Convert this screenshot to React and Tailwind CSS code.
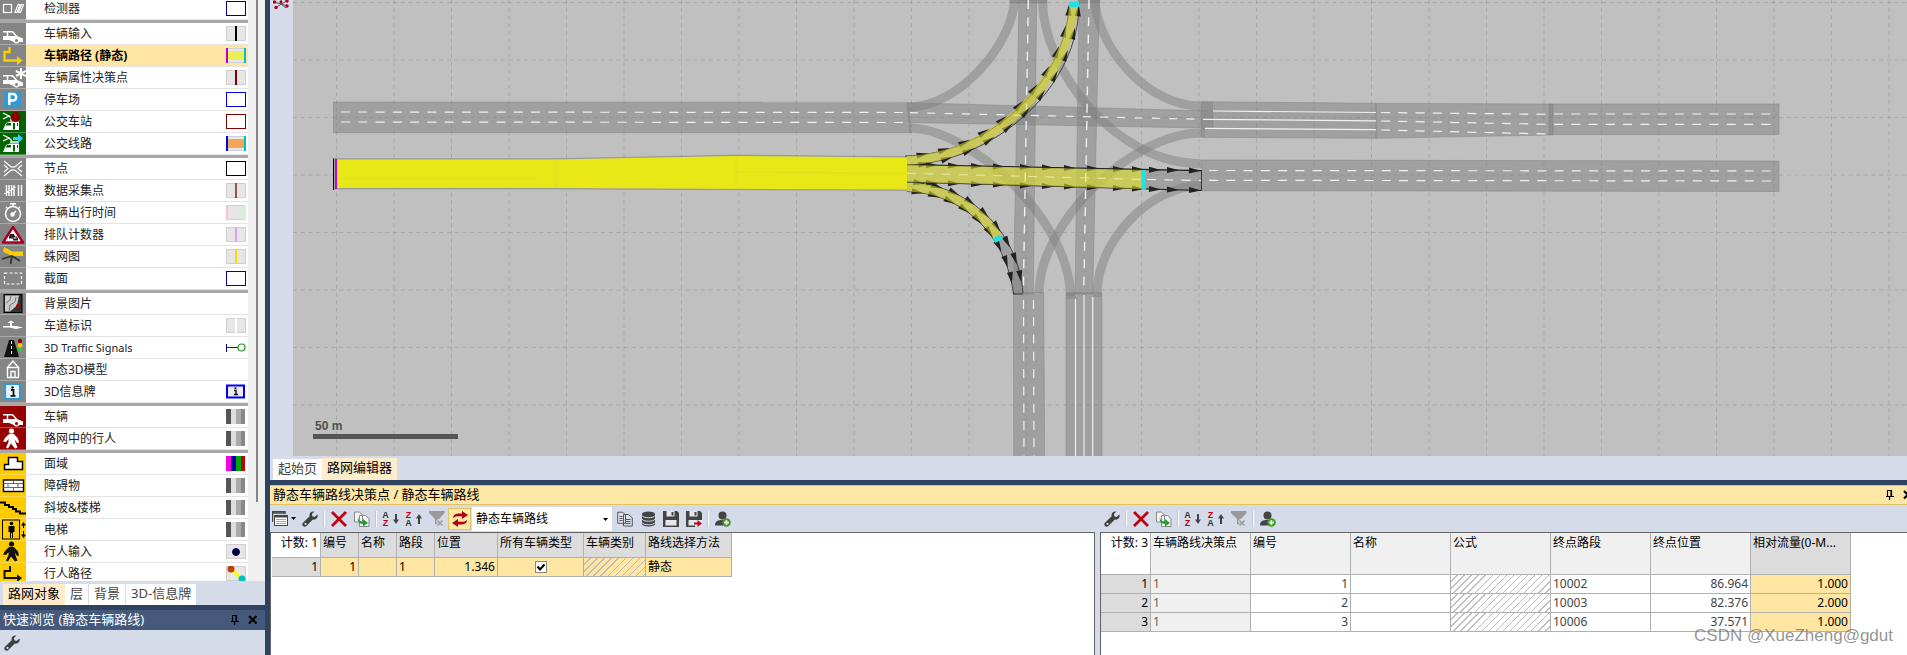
import { useState } from 'react';
import { clsx } from 'clsx';

const GREY = 'bg-[#858585]';
const GREEN = 'bg-[#006400]';
const RED = 'bg-[#960000]';
const YELLOW = 'bg-[#ffcc00]';

const objectGroups = [
  [{ id: 'detector', label: '检测器', bg: GREY, swatch: 'box-navy' }],
  [
    { id: 'input', label: '车辆输入', bg: GREY, swatch: 'bar-black' },
    { id: 'route', label: '车辆路径 (静态)', bg: GREY, swatch: 'route' },
    { id: 'attr', label: '车辆属性决策点', bg: GREY, swatch: 'bar-maroon' },
    { id: 'parking', label: '停车场', bg: GREY, swatch: 'box-blue' },
    { id: 'stop', label: '公交车站', bg: GREEN, swatch: 'box-maroon' },
    { id: 'line', label: '公交线路', bg: GREEN, swatch: 'line' },
  ],
  [
    { id: 'node', label: '节点', bg: GREY, swatch: 'box-black' },
    { id: 'collect', label: '数据采集点', bg: GREY, swatch: 'bar-brown' },
    { id: 'time', label: '车辆出行时间', bg: GREY, swatch: 'time' },
    { id: 'queue', label: '排队计数器', bg: GREY, swatch: 'bar-violet' },
    { id: 'flow', label: '蛛网图', bg: GREY, swatch: 'bar-gold' },
    { id: 'section', label: '截面', bg: GREY, swatch: 'box-mid' },
  ],
  [
    { id: 'image', label: '背景图片', bg: GREY },
    { id: 'marking', label: '车道标识', bg: GREY, swatch: 'bar-white' },
    { id: 'signal', label: '3D Traffic Signals', bg: GREY, swatch: 'signal', latin: true },
    { id: 'model', label: '静态3D模型', bg: GREY },
    { id: 'info', label: '3D信息牌', bg: GREY, swatch: 'info' },
  ],
  [
    { id: 'vehicle', label: '车辆', bg: RED, swatch: 'greys' },
    { id: 'person', label: '路网中的行人', bg: RED, swatch: 'greys' },
  ],
  [
    { id: 'area', label: '面域', bg: YELLOW, swatch: 'colors' },
    { id: 'obstacle', label: '障碍物', bg: YELLOW, swatch: 'greys' },
    { id: 'ramp', label: '斜坡&楼梯', bg: YELLOW, swatch: 'greys' },
    { id: 'lift', label: '电梯', bg: YELLOW, swatch: 'greys' },
    { id: 'pedInput', label: '行人输入', bg: YELLOW, swatch: 'dot' },
    { id: 'pedRoute', label: '行人路径', bg: YELLOW, swatch: 'pedRoute' },
  ],
];

const car = (wheel) => (
  <>
    <path d="M3 8.700h9.500l4.500 5M7.500 9v4.500" fill="none" stroke="#fff" strokeWidth="1.500" />
    <path d="M3 13h14l6 2.500V19h-9l-5-2H3z" fill="#fff" />
    <circle cx="16.500" cy="17.500" r="2.300" fill={wheel} stroke="#fff" strokeWidth="1.400" />
  </>
);

const tram = (
  <>
    <path d="M3 2l6 3-6 3M9 5l3 3" fill="none" stroke="#fff" strokeWidth="1.300" />
    <path d="M3 19l3-7 4-1.500h9V19z" fill="#fff" />
    <path d="M5.500 14.500l1.500-2.500h4v2.500zM13 18.500V12h2v6.500zM17 12h1v3h-1z" fill="#006400" />
    <path d="M10 9h9" stroke="#fff" strokeWidth="1.500" />
  </>
);

const walker = (color) => (
  <g fill={color}>
    <circle cx="11.500" cy="3" r="2.600" />
    <path d="M9 6h5l4 4.500 1 4-2 .5-2-3.500.5 3 2 5-2.500 1-4-5-3 5L6 19.500l2.500-5.500V11L6 14l-3-.5L5 10z" />
  </g>
);

const objectIcons = {
  detector: (
    <g fill="none" stroke="#fff" strokeWidth="1.200">
      <rect x="3.500" y="6.500" width="8" height="8" />
      <path d="M15 14.500l3-8h2l-3 8zM18.500 14.500l3-8h2l-3 8z" />
    </g>
  ),
  input: car('#858585'),
  vehicle: car('#960000'),
  route: (
    <>
      <path d="M9.500 2v5h-5v8.500H18" fill="none" stroke="#fc0" strokeWidth="2.400" />
      <path d="M17 11l5.500 4.500L17 20z" fill="#fc0" />
    </>
  ),
  attr: (
    <>
      {car('#858585')}
      <path d="M21 1v11M16 4l10 5M26 4l-10 5" stroke="#fff" strokeWidth="2" />
    </>
  ),
  parking: (
    <>
      <rect x="4" y="2" width="17" height="17" fill="#3399d0" />
      <path d="M9.300 16V5H13a3.200 3.200 0 0 1 0 6.500H9.300" fill="none" stroke="#fff" strokeWidth="2.400" />
    </>
  ),
  stop: (
    <>
      {tram}
      <circle cx="15.500" cy="6" r="5" fill="#8b0000" />
    </>
  ),
  line: (
    <>
      {tram}
      <path d="M13 4h5V1l5 4.500-5 4.500V7h-5z" fill="#3cf" />
    </>
  ),
  node: (
    <path d="M4 3l6 5c1.500 1.500 4.500 1.500 6 0l6-5M4 18l6-5c1.500-1.500 4.500-1.500 6 0l6 5M4 7l4 3.500L4 14M22 7l-4 3.500 4 3.500" fill="none" stroke="#fff" strokeWidth="1.100" />
  ),
  collect: (
    <path d="M6.500 5v11M9 5v11M11.500 5v11M14 5v11M4.500 14l11-7M18.500 5v11M21.500 5v11" stroke="#fff" strokeWidth="1.400" />
  ),
  time: (
    <g fill="none" stroke="#fff" strokeWidth="1.500">
      <circle cx="13" cy="12" r="7.500" />
      <path d="M10 1.800h6M13 2v3M6 5l1.500 1.500M20 5l-1.500 1.500M16 9l-4 4" />
      <circle cx="12.500" cy="12.500" r="1.500" />
    </g>
  ),
  queue: (
    <>
      <path d="M13 3L3 18.500h20z" fill="#fff" stroke="#a50021" strokeWidth="2.400" strokeLinejoin="round" />
      <path d="M9 12.500l1-2.500h4l1 2.500h2l1 2v2h-5v-2H9z" fill="#222" />
      <path d="M13.500 14h3" stroke="#fff" />
    </>
  ),
  flow: (
    <>
      <path d="M4 1l8 4.500h11V10H12L3 5.500z" fill="#fc0" />
      <path d="M2 13l10-3 8 5M12 10l-1.500 8" fill="none" stroke="#333" strokeWidth="1.800" />
    </>
  ),
  section: <rect x="4.500" y="5" width="17" height="11" fill="none" stroke="#fff" strokeWidth="1.200" strokeDasharray="3 2" />,
  image: (
    <>
      <rect x="4" y="1.500" width="18" height="18" fill="#333" stroke="#000" />
      <path d="M5 2.500h14l-2 10-7 6H5z" fill="#ccc" />
      <path d="M6 10l4-3 1-4M9 18l1-6 5-3 1-5" fill="none" stroke="#777" />
      <circle cx="18" cy="13" r="2" fill="#a00" />
    </>
  ),
  marking: (
    <path d="M3 11h13l7 1.500-7 1.500-7-1.500H3zM10 11V8H7.500L11 5.500 14.500 8H12v3z" fill="#fff" />
  ),
  signal: (
    <>
      <path d="M9 3h5l5 17H4z" fill="#111" />
      <path d="M11.500 4v15" stroke="#fff" strokeDasharray="3 2" />
      <circle cx="20" cy="4" r="2.200" fill="#a00000" />
      <circle cx="20" cy="8.500" r="2.200" fill="#fc0" />
      <circle cx="20" cy="13" r="2.200" fill="#3c3" />
    </>
  ),
  model: (
    <path d="M7.500 8.500L13 2l5.500 6.500zM7.500 8.500v10h11v-10M11 18v-5.500h4V18" fill="none" stroke="#fff" strokeWidth="1.400" />
  ),
  info: (
    <>
      <rect x="5" y="3" width="15" height="15" fill="#e8f4fa" stroke="#3399cc" strokeWidth="2.200" />
      <path d="M11 9h2.500v5.500M10.500 14.800h5" fill="none" stroke="#111" strokeWidth="1.800" />
      <circle cx="12.500" cy="6.500" r="1.200" fill="#111" />
    </>
  ),
  person: walker('#fff'),
  area: <path d="M4.500 16.500v-5h4v-7h9v4h5v8z" fill="#fff" stroke="#000" strokeWidth="1.500" />,
  obstacle: (
    <>
      <rect x="3.500" y="5" width="20" height="11.500" fill="#fff" stroke="#000" strokeWidth="1.400" />
      <path d="M3 8.500h20M3 12.500h20M13.500 5v3.500M8 9v3.500M18 9v3.500M13.500 13v3.500" stroke="#444" strokeWidth=".8" />
    </>
  ),
  ramp: <path d="M0 5.500h5v2.500h4v2h4v2h3v2.500h4v2h6" fill="none" stroke="#000" strokeWidth="2" />,
  lift: (
    <>
      <rect x="2.500" y="1" width="17" height="19" fill="none" stroke="#000" />
      <circle cx="11.500" cy="4.500" r="1.800" />
      <path d="M8.500 7h6v6H13v6h-1v-5h-1v5h-1v-6H8.500z" />
      <path d="M23.500 4v5M23.500 12v6" stroke="#000" />
      <path d="M21 6.500L23.500 3 26 6.500zM21 15.500l2.500 3.500 2.500-3.500z" />
    </>
  ),
  pedInput: walker('#111'),
  pedRoute: (
    <>
      <path d="M10 3v5H4.500v7H18" fill="none" stroke="#111" strokeWidth="2" />
      <path d="M17 11.500l5 3.500-5 4z" fill="#111" />
    </>
  ),
};

const boxColors = {
  'box-navy': 'border-[#000080]',
  'box-blue': 'border-[#0000e6]',
  'box-maroon': 'border-[#800000]',
  'box-black': 'border-black',
  'box-mid': 'border-[#0000b4]',
};

const barColors = {
  'bar-black': 'bg-black',
  'bar-maroon': 'bg-[#800000]',
  'bar-brown': 'bg-[#8b5a3c]',
  'bar-violet': 'bg-[#d9a0ff]',
  'bar-gold': 'bg-[#ffd700]',
  'bar-white': 'bg-white',
};

function Swatch({ kind }) {
  if (!kind) return <span className="h-[15px] w-5" />;
  if (boxColors[kind]) return <span className={clsx('h-[15px] w-5 border bg-white', boxColors[kind])} />;
  if (barColors[kind]) {
    return (
      <span className="flex h-[15px] w-5 justify-center border border-[#d0d0d0] bg-[#e6e6e6]">
        <span className={clsx('-my-px w-0.5', barColors[kind])} />
      </span>
    );
  }
  if (kind === 'greys' || kind === 'colors') {
    const grey = kind === 'greys';
    return (
      <span className="flex h-[15px] w-5">
        <span className={clsx('w-[5px]', grey ? 'bg-[#555]' : 'bg-[#f0d]')} />
        <span className={clsx('w-[5px]', grey ? 'bg-[#ddd]' : 'bg-[#0000a8]')} />
        <span className={clsx('w-[5px]', grey ? 'bg-[#aaa]' : 'bg-[#00a800]')} />
        <span className={clsx('w-1', grey ? 'bg-[#888]' : 'bg-[#c00000]')} />
      </span>
    );
  }
  return (
    <svg className="h-[15px] w-5" viewBox="0 0 20 15">
      {kind !== 'signal' && kind !== 'info' && <rect x=".5" y=".5" width="19" height="14" fill="#e6e6e6" stroke="#d0d0d0" />}
      {kind === 'route' && (
        <>
          <rect x="2" y="3" width="16" height="9" fill="#eded55" />
          <path d="M1 0v15" stroke="#c000c0" strokeWidth="2" />
          <path d="M19 0v15" stroke="#00c0c0" strokeWidth="2" />
        </>
      )}
      {kind === 'line' && (
        <>
          <rect x="2" y="3" width="16" height="9" fill="#f4a55c" />
          <path d="M1 0v15" stroke="#0000f0" strokeWidth="2" />
          <path d="M19 0v15" stroke="#00c0c0" strokeWidth="2" />
        </>
      )}
      {kind === 'time' && (
        <>
          <path d="M1 0v15" stroke="#ffc0c0" strokeWidth="2" />
          <path d="M19 0v15" stroke="#c0ffc0" strokeWidth="2" />
        </>
      )}
      {kind === 'signal' && (
        <>
          <path d="M.5 4v8" stroke="#000080" />
          <path d="M1 7.500h11" stroke="#800000" />
          <circle cx="15.500" cy="7.500" r="3.500" fill="#fff" stroke="#1a961a" strokeWidth="1.200" />
        </>
      )}
      {kind === 'info' && (
        <>
          <rect x="1" y="1.500" width="17" height="12" fill="#ebebeb" stroke="#0000f5" strokeWidth="2" />
          <path d="M8 6.500h2V10M8 10.500h4" fill="none" stroke="#111" strokeWidth="1.400" />
          <rect x="8.500" y="3.500" width="2" height="1.500" />
        </>
      )}
      {kind === 'dot' && <circle cx="10" cy="8" r="3.500" fill="#000020" stroke="#000080" />}
      {kind === 'pedRoute' && (
        <>
          <path d="M5 3l12 11" stroke="#ff0" strokeWidth="3" />
          <circle cx="5" cy="3" r="3.500" fill="#c04000" />
          <circle cx="16" cy="13" r="3.500" fill="#00c0c0" />
        </>
      )}
    </svg>
  );
}

function PinIcon() {
  return (
    <svg className="h-3 w-3" viewBox="0 0 12 12" fill="none" stroke="#000">
      <path d="M3.500 7V1.500h4V7M7 1v6M2 7.500h8M5.500 8v3" strokeWidth="1.200" />
    </svg>
  );
}

function CloseIcon() {
  return (
    <svg className="h-3 w-3 shrink-0" viewBox="0 0 12 12" stroke="#000" strokeWidth="2.200">
      <path d="M2 2l7.500 7.500M9.500 2L2 9.500" />
    </svg>
  );
}

const toolIcons = {
  list: (
    <>
      <path d="M.5 11V.7H13V3" fill="none" stroke="#444" strokeWidth="1.400" />
      <path d="M.5 2H13" stroke="#444" strokeWidth="1.400" />
      <rect x="2.500" y="4.500" width="13" height="10" fill="#fff" stroke="#444" />
      <path d="M2 5.500h14" stroke="#444" strokeWidth="2" />
      <path d="M4.500 8.500h9M4.500 10.500h9M4.500 12.500h9" stroke="#555" strokeDasharray="1 1" />
    </>
  ),
  wrench: (
    <path d="M15.500 3.500l-3 2.500-2.200-.8-.4-2.200L12.500.6C9.500-.3 7 2 7.600 5.200L1 11.700c-1 1-.8 2.500 0 3.300s2.500.9 3.400 0l6.400-6.500c3 .8 5.700-1.800 4.700-5zM3.500 14a1.100 1.100 0 1 1 0-2.200 1.100 1.100 0 0 1 0 2.200z" fill="#3f3f3f" />
  ),
  remove: <path d="M1 1l14 14M15 1L1 15" stroke="#c00010" strokeWidth="2.800" />,
  duplicate: (
    <>
      <path d="M.5 1h5l3 3v7h-8zM5.500 4.500h6l3.500 3v8H5.500z" fill="#f4f4f4" stroke="#888" />
      <path d="M4 6c0 3 1.500 4.500 5 4.500V8l5 4-5 3.500V13c-4 0-6-3-5-7z" fill="#16a330" />
    </>
  ),
  filter: (
    <>
      <path d="M0 0h15.500v2L10 8v8l-4-3V8L0 2z" fill="#9a9a9a" />
      <path d="M8 9l6 6M14 9l-6 6" stroke="#d6dbe9" strokeWidth="3.200" />
      <path d="M8.500 9.500l5 5M13.500 9.500l-5 5" stroke="#9a9a9a" strokeWidth="1.500" />
    </>
  ),
  sync: (
    <>
      <path d="M1 7c0-4 4-5 9-4.500V0l6 4-6 4V5.500C6 5 3 5 1 7z" fill="#b00018" />
      <path d="M15 9c0 4-4 5-9 4.500V16l-6-4 6-4v2.500c4 .5 7 .5 9-1.500z" fill="#b00018" />
    </>
  ),
  copy: (
    <>
      <path d="M.7 1.200h5l2.800 2.800v8.300H.7zM6.500 3.500h5.300L15.300 7v8H6.500z" fill="#dde1ec" stroke="#555" />
      <path d="M2.500 5.500h3M2.500 7.500h3M2.500 9.500h3M8.500 8.500h5M8.500 10.500h5M8.500 12.500h5" stroke="#555" />
    </>
  ),
  database: (
    <>
      <path d="M2 3v10c0 1.500 3 2.500 6.500 2.500S15 14.500 15 13V3z" fill="#444" />
      <ellipse cx="8.500" cy="2.800" rx="6.500" ry="2.300" fill="#444" />
      <path d="M2 4.500c1 3 12 3 13 0M2 8c1 3 12 3 13 0M2 11.500c1 3 12 3 13 0" fill="none" stroke="#d6dbe9" />
    </>
  ),
  save: (
    <>
      <path d="M0 0h14l2 2v14H0z" fill="#444" />
      <path d="M3.500 0h8v5.500h-8zM2.500 9h11v5.500h-11z" fill="#e4e7f0" />
      <path d="M8.500 1h2v3.500h-2z" fill="#444" />
    </>
  ),
  saveAs: (
    <>
      <path d="M0 0h14l2 2v14H0z" fill="#444" />
      <path d="M3.500 0h8v5.500h-8zM2.500 9H16v7H9v-1.500H2.500z" fill="#e4e7f0" />
      <path d="M8.500 1h2v3.500h-2z" fill="#444" />
      <path d="M8 11.500h3.500V9l4.500 3.500-4.500 3.500v-2.500H8z" fill="#c00020" />
    </>
  ),
  person: (
    <>
      <circle cx="7.500" cy="4.500" r="4" fill="#444" />
      <path d="M0 14.500C0 10 3 9 7.500 9s6 2 6 5.500z" fill="#444" />
      <circle cx="11.500" cy="11.500" r="4.300" fill="#3c9f22" />
      <path d="M11.500 9v5M9 11.500h5" stroke="#fff" strokeWidth="1.500" />
    </>
  ),
};

function ToolButton({ icon, label, active }) {
  return (
    <button
      aria-label={label}
      className={clsx(
        'flex h-[22px] w-[23px] shrink-0 items-center justify-center',
        active && 'border border-[#e5c365] bg-[#ffe8a6]'
      )}
    >
      <svg className="h-4 w-4" viewBox="0 0 16 16">{toolIcons[icon]}</svg>
    </button>
  );
}

function SortButton({ desc, label }) {
  return (
    <button aria-label={label} className="flex h-[22px] w-[23px] shrink-0 items-center justify-center gap-1 font-['Liberation_Sans'] text-[9px] leading-[8px] font-bold">
      <span className="flex flex-col">
        <span className={desc ? 'text-[#c00010]' : 'text-[#333]'}>{desc ? 'Z' : 'A'}</span>
        <span className={desc ? 'text-[#333]' : 'text-[#c00010]'}>{desc ? 'A' : 'Z'}</span>
      </span>
      <svg className={clsx('h-[10px] w-[6px]', desc && 'rotate-180')} viewBox="0 0 6 10">
        <path d="M2 0h2v5.500h2L3 10 0 5.500h2z" fill="#444" />
      </svg>
    </button>
  );
}

function Divider() {
  return <span className="mx-0.5 h-4 w-0.5 shrink-0 border-r border-white bg-[#c4c8d2]" />;
}

// cubic curves of the turning lanes, in canvas units
const turns = [
  [1014.5, 0, 1013, 42, 960, 107, 909, 107],
  [909, 128, 970, 128, 1070, 220, 1070.5, 296],
  [1042.5, 0, 1043, 70, 1115, 163.7, 1201, 163.7],
  [1095, 0, 1097, 45, 1145, 106, 1201, 106],
  [1201, 133, 1130, 133, 1039, 225, 1039, 293],
  [1201, 185.5, 1150, 186, 1098, 240, 1097, 293],
];
const leftTurn = [907, 160.5, 988, 158, 1068, 86, 1074, 4];
const rightTurn = [907, 187, 965, 188, 1012, 232, 1018, 293];

const toPath = ([a, b, c, d, e, f, g, h]) => `M${a} ${b}C${c} ${d} ${e} ${f} ${g} ${h}`;

// walks along a curve and returns evenly spaced arrow heads on one side of it
function arrowsAlong([x0, y0, x1, y1, x2, y2, x3, y3], offset, step) {
  const arrows = [];
  let travelled = 0;
  let last = [x0, y0];
  for (let i = 1; i <= 400; i++) {
    const t = i / 400;
    const u = 1 - t;
    const x = u * u * u * x0 + 3 * u * u * t * x1 + 3 * u * t * t * x2 + t * t * t * x3;
    const y = u * u * u * y0 + 3 * u * u * t * y1 + 3 * u * t * t * y2 + t * t * t * y3;
    const dx = x - last[0];
    const dy = y - last[1];
    const len = Math.hypot(dx, dy);
    travelled += len;
    last = [x, y];
    if (travelled >= step) {
      arrows.push({ x: x - (dy / len) * offset, y: y + (dx / len) * offset, angle: (Math.atan2(dy, dx) * 180) / Math.PI });
      travelled = 0;
    }
  }
  return arrows;
}

function Arrows({ items }) {
  return items.map((a, i) => (
    <path key={i} d="M0 0L-12 -3V3Z" transform={`translate(${a.x} ${a.y}) rotate(${a.angle})`} />
  ));
}

const straightArrows = [938, 960, 983, 1005, 1032, 1054, 1076, 1099, 1125, 1144, 1161, 1179, 1201];

function NetworkMap() {
  const columns = Array.from({ length: 28 }, (_, i) => 336.5 + i * 57.5);
  const rows = Array.from({ length: 8 }, (_, i) => 2.5 + i * 57.5);
  return (
    <svg className="block h-full w-full bg-[#c0c0c0]" viewBox="293 0 1614 456" preserveAspectRatio="xMinYMin slice" role="img" aria-label="路网编辑器">
      <g fill="#808080" fillOpacity=".5" stroke="#808080" strokeOpacity=".45">
        <path d="M333.500 102L908 102.300 911 132.700 333.500 132.700z" />
        <path d="M333.500 158.700H555L736 155 907 156.700V190.300L555 189H333.500z" />
        <path d="M1201 101.700L1376 103.300V138.300L1201 137.300z" />
        <path d="M1376 103.300L1553 104V135L1376 138.300z" />
        <path d="M1549 104H1779V134.500H1549z" />
        <path d="M1201.500 160L1779 161V191.500L1201.500 190.700z" />
        <path d="M1013.500 292.500H1043.700L1044.700 460H1013.700z" />
        <path d="M1066 292.500H1102V460H1066z" />
        <path d="M907 102.700L1213 111V128.500L1201 128 909 122.500z" />
        <path d="M907 164.700L1201 170.500V190.500L907 182z" />
        <path d="M1019 0H1036.700L1033.300 294H1013.300z" />
        <path d="M1079 0H1099.300L1092.700 294H1075z" />
        <path d="M1010 -4H1046.700V3H1010zM1078 -4H1100V3H1078z" />
      </g>
      <g fill="none" stroke="#808080" strokeOpacity=".5" strokeWidth="9">
        {turns.map((t, i) => <path key={i} d={toPath(t)} />)}
        <path d={toPath(leftTurn)} />
        <path d={toPath(rightTurn)} />
      </g>
      <g fill="#808080" fillOpacity=".4">
        <path d="M1201 101.500H1213V111H1201zM1201 128H1205V137H1201z" />
        <path d="M1066 293H1075.500V299H1066zM1093 293H1102V297H1093z" />
      </g>
      <g stroke="#787878" strokeOpacity=".3">
        {columns.map((x) => <path key={x} d={`M${x} 0V456`} strokeDasharray="4 3.700" />)}
        {rows.map((y) => <path key={y} d={`M293 ${y}H1907`} strokeDasharray="4 3.700" />)}
      </g>

      {/* lane markings */}
      <g fill="none" stroke="#f0f0f0" strokeWidth="1.200" strokeDasharray="9 8.280">
        <path d="M341 112L908 112.500M341 122L908 122.500" />
        <path d="M910 112.700L1201 119.300" strokeDasharray="8 9.280" />
        <path d="M1381 112.500L1548 114.300M1381 121L1548 124.300M1381 130L1548 134" />
        <path d="M1554 114H1771M1554 124.300H1771" />
        <path d="M1209 170.500L1775 171M1209 180.300L1775 181" />
        <path d="M1023.500 300L1024 456M1033.500 300L1034 456" />
        <path d="M1028.300 0L1023.300 293M1089 0L1083.700 293" strokeWidth="1.400" />
        <path d="M1147 179.500L1201 180.500" />
      </g>
      <g fill="none" stroke="#f0f0f0" strokeWidth="1.200">
        <path d="M1213 111L1376 112.500M1203 119.300L1376 120.800M1205 128.300L1376 129.700" />
        <path d="M1075.500 299V456M1084 295V456M1092.700 297V456" />
      </g>

      {/* route directions, partly covered by the translucent routes */}
      <g fill="none" stroke="#222">
        <path d="M905 156C988 155 1062 85 1069 10M907 165C992 162 1074 92 1079 10" strokeWidth=".8" />
        <path d="M907 182C968 184 1018 230 1023 293M907 191.500C962 193 1006 234 1013.500 294" strokeWidth=".8" />
        <path d="M907 164.700L1201 170.700M907 182L1201 190.500" strokeWidth="1.200" />
        <path d="M1201.500 170V191M1013 294H1023" strokeWidth=".8" />
      </g>
      <g fill="#222">
        <Arrows items={arrowsAlong(leftTurn, -4.7, 22.3)} />
        <Arrows items={arrowsAlong(leftTurn, 4.7, 22.3)} />
        <Arrows items={arrowsAlong(rightTurn, -4.7, 17.4)} />
        <Arrows items={arrowsAlong(rightTurn, 4.7, 17.4)} />
        <Arrows items={straightArrows.map((x) => ({ x, y: 164.7 + (x - 907) * 0.0204, angle: 1 }))} />
        <Arrows items={straightArrows.map((x) => ({ x, y: 182.3 + (x - 907) * 0.028, angle: 2 }))} />
      </g>

      {/* selected routes */}
      <path d="M337 159.500H555L736 156 907 157.500V189.500L555 188H337z" fill="#e8e817" />
      <path d="M555 159V188M557 159V188M736 156V189M736 172L907 173.300M337 179H540" stroke="#d8d830" strokeWidth=".6" fill="none" />
      <path d="M336 159V189" stroke="#c800c8" strokeWidth="2" />
      <path d="M333.500 158.500V190" stroke="#000" />
      <path d="M907 165L1142 170V189L907 182z" fill="#eeee20" fillOpacity=".53" />
      <g fill="none" stroke="#eeee20" strokeOpacity=".53" strokeWidth="9">
        <path d={toPath(leftTurn)} />
        <path d={toPath(rightTurn)} pathLength="100" strokeDasharray="65 100" />
      </g>
      <path d="M907 173.300L1141 179.300" stroke="#e6e69a" strokeWidth="1.200" strokeDasharray="9 8.280" />
      <g fill="#20e0e0">
        <path d="M1069 1.700H1079V7H1069zM1141.500 170H1146V190H1141.500z" />
        <path d="M992.700 238.500L1000 234.500 1003 238.500 995.500 243z" />
      </g>

      {/* scale */}
      <text x="315" y="430" className="font-['Liberation_Sans'] text-[12px] font-bold" fill="#505050">50 m</text>
      <rect x="313" y="434" width="145" height="5" fill="#555" />
    </svg>
  );
}

function ObjectSidebar() {
  const [selected, setSelected] = useState('车辆路径 (静态)');
  return (
    <aside className="flex w-[265px] shrink-0 flex-col bg-[#d6dbe9]">
      <div className="flex min-h-0 flex-1 overflow-hidden bg-[#f0f0f0]">
        <ul className="-mt-0.5 w-[248px] bg-white">
          {objectGroups.map((group, i) => (
            <li key={i} className={clsx(i < objectGroups.length - 1 && 'border-b-3 border-[#a8a8a8]')}>
              {group.map((item) => (
                <button
                  key={item.label}
                  onClick={() => setSelected(item.label)}
                  className={clsx(
                    'flex h-[22px] w-full items-stretch text-left',
                    item.latin ? 'text-[11px]' : 'text-[12px]',
                    selected === item.label ? 'bg-[#ffe6a2] font-bold text-black' : 'text-[#222]'
                  )}
                >
                  <span className={clsx('w-[26px] border-b border-white/30', item.bg)}>
                    <svg className="h-[21px] w-[26px]" viewBox="0 0 26 21">{objectIcons[item.id]}</svg>
                  </span>
                  <span className="flex flex-1 items-center justify-between border-b border-[#e4e4e4] pr-0.5 pl-[18px]">
                    <span className="leading-5">{item.label}</span>
                    <Swatch kind={item.swatch} />
                  </span>
                </button>
              ))}
            </li>
          ))}
        </ul>
        <div className="ml-2 h-[502px] w-0.5 bg-[#858585]" />
      </div>
      <div className="flex h-6 items-end pl-[3px] text-[13px] text-[#444]">
        <button className="h-[21px] bg-[#ffeccb] px-[5px] pb-0.5 text-black">路网对象</button>
        <button className="h-[21px] border-r border-[#d6dbe9] bg-white px-[5px] pb-0.5">层</button>
        <button className="h-[21px] border-r border-[#d6dbe9] bg-white px-[5px] pb-0.5">背景</button>
        <button className="h-[21px] bg-white px-[5px] pb-0.5">3D-信息牌</button>
      </div>
      <div className="mt-[5px] flex h-5 shrink-0 items-center bg-[#45597b] pr-[6px] pl-[3px] text-[13px] text-white shadow-[0_-5px_0_#2f4262]">
        <h2 className="flex-1">快速浏览 (静态车辆路线)</h2>
        <button aria-label="固定" className="mr-[6px]"><PinIcon /></button>
        <button aria-label="关闭"><CloseIcon /></button>
      </div>
      <div className="flex h-[25px] shrink-0 items-center">
        <ToolButton icon="wrench" label="设置" />
      </div>
    </aside>
  );
}

const hatch = 'bg-[repeating-linear-gradient(135deg,transparent_0_4px,#bdbdbd_4px_5px)]';
const head = 'border-r border-b border-[#b0b0b0] px-0.5 text-left align-top font-normal leading-5 truncate';
const cell = 'border-r border-b border-[#b0b0b0] px-0.5 truncate';

function DecisionTable() {
  const gold = 'bg-[#ffe6a2]';
  return (
    <table className="w-[460px] table-fixed border-separate border-spacing-0 text-[12px] leading-[18px]">
      <colgroup>
        <col className="w-[49px]" /><col className="w-[38px]" /><col className="w-[38px]" /><col className="w-[38px]" />
        <col className="w-[63px]" /><col className="w-[86px]" /><col className="w-[62px]" /><col className="w-[86px]" />
      </colgroup>
      <thead>
        <tr className="h-[25px] bg-[#dcdcdc]">
          <th className={clsx(head, 'bg-white text-right!')}>计数: 1</th>
          <th className={head}>编号</th>
          <th className={head}>名称</th>
          <th className={head}>路段</th>
          <th className={head}>位置</th>
          <th className={head}>所有车辆类型</th>
          <th className={head}>车辆类别</th>
          <th className={head}>路线选择方法</th>
        </tr>
      </thead>
      <tbody>
        <tr className="h-[19px]">
          <td className={clsx(cell, 'bg-[#dcdcdc] text-right')}>1</td>
          <td className={clsx(cell, gold, 'text-right')}>1</td>
          <td className={clsx(cell, gold)} />
          <td className={clsx(cell, gold)}>1</td>
          <td className={clsx(cell, gold, 'text-right')}>1.346</td>
          <td className={clsx(cell, gold)}>
            <span className="relative mx-auto block h-3 w-3">
              <input type="checkbox" defaultChecked aria-label="所有车辆类型" className="peer block h-3 w-3 appearance-none border border-[#888] bg-white" />
              <svg className="pointer-events-none absolute inset-0 hidden h-3 w-3 peer-checked:block" viewBox="0 0 12 12">
                <path d="M2.500 5.500l2.500 3 4.500-5" fill="none" stroke="#000" strokeWidth="2" />
              </svg>
            </span>
          </td>
          <td className={clsx(cell, gold, hatch)} />
          <td className={clsx(cell, gold)}>静态</td>
        </tr>
      </tbody>
    </table>
  );
}

const routes = [
  { no: 1, link: '10002', pos: '86.964', flow: '1.000' },
  { no: 2, link: '10003', pos: '82.376', flow: '2.000' },
  { no: 3, link: '10006', pos: '37.571', flow: '1.000' },
];

function RouteTable() {
  return (
    <table className="w-[750px] table-fixed border-separate border-spacing-0 text-[12px] leading-[18px] text-[#444]">
      <colgroup>
        <col className="w-[50px]" /><col /><col /><col /><col /><col /><col /><col />
      </colgroup>
      <thead className="text-black">
        <tr className="h-[42px] bg-[#f0f0f0]">
          <th className={clsx(head, 'bg-white text-right!')}>计数: 3</th>
          <th className={head}>车辆路线决策点</th>
          <th className={head}>编号</th>
          <th className={head}>名称</th>
          <th className={head}>公式</th>
          <th className={head}>终点路段</th>
          <th className={head}>终点位置</th>
          <th className={clsx(head, 'bg-[#dcdcdc]')}>相对流量(0-M...</th>
        </tr>
      </thead>
      <tbody>
        {routes.map((r) => (
          <tr key={r.no} className="h-[19px]">
            <td className={clsx(cell, 'bg-[#dcdcdc] text-right text-black')}>{r.no}</td>
            <td className={clsx(cell, 'bg-[#f0f0f0] text-[#666]')}>1</td>
            <td className={clsx(cell, 'text-right')}>{r.no}</td>
            <td className={cell} />
            <td className={clsx(cell, hatch)} />
            <td className={cell}>{r.link}</td>
            <td className={clsx(cell, 'text-right')}>{r.pos}</td>
            <td className={clsx(cell, 'bg-[#ffe6a2] text-right text-black')}>{r.flow}</td>
          </tr>
        ))}
      </tbody>
    </table>
  );
}

function ListPanel() {
  return (
    <section className="flex h-[170px] shrink-0 flex-col">
      <div className="flex h-5 shrink-0 items-center overflow-hidden border-y border-[#e5c365] bg-[#ffe8a6] pl-[3px] text-[13px] text-black">
        <h2 className="flex-1">静态车辆路线决策点 / 静态车辆路线</h2>
        <button aria-label="固定" className="mr-[6px]"><PinIcon /></button>
        <button aria-label="关闭" className="-mr-[7px]"><CloseIcon /></button>
      </div>
      <div className="flex min-h-0 flex-1 bg-[#d6dbe9]">
        <div className="flex w-[825px] flex-col">
          <div className="flex h-[27px] items-center">
            <button aria-label="列表" className="flex h-[22px] w-7 items-center gap-[3px] pl-0.5">
              <svg className="h-4 w-4 shrink-0" viewBox="0 0 16 16">{toolIcons.list}</svg>
              <svg className="h-[3px] w-[5px] shrink-0" viewBox="0 0 5 3"><path d="M0 0h5L2.500 3z" /></svg>
            </button>
            <ToolButton icon="wrench" label="设置" />
            <Divider />
            <ToolButton icon="remove" label="删除" />
            <ToolButton icon="duplicate" label="复制行" />
            <Divider />
            <SortButton label="升序" />
            <SortButton desc label="降序" />
            <ToolButton icon="filter" label="筛选" />
            <ToolButton icon="sync" label="同步" active />
            <div className="relative mx-px">
              <select aria-label="关联列表" className="block h-6 w-[140px] appearance-none bg-white pl-1 text-[12px] text-black">
                <option>静态车辆路线</option>
              </select>
              <svg className="pointer-events-none absolute top-[11px] right-1 h-[3px] w-[5px]" viewBox="0 0 5 3"><path d="M0 0h5L2.500 3z" /></svg>
            </div>
            <ToolButton icon="copy" label="复制" />
            <ToolButton icon="database" label="数据库" />
            <ToolButton icon="save" label="保存" />
            <ToolButton icon="saveAs" label="另存为" />
            <Divider />
            <ToolButton icon="person" label="添加属性" />
          </div>
          <div className="flex-1 border-x border-t border-[#646464] bg-white pl-px">
            <DecisionTable />
          </div>
        </div>
        <div className="ml-[5px] flex min-w-0 flex-1 flex-col">
          <div className="flex h-[27px] items-center">
            <ToolButton icon="wrench" label="设置" />
            <Divider />
            <ToolButton icon="remove" label="删除" />
            <ToolButton icon="duplicate" label="复制行" />
            <Divider />
            <SortButton label="升序" />
            <SortButton desc label="降序" />
            <ToolButton icon="filter" label="筛选" />
            <Divider />
            <ToolButton icon="person" label="添加属性" />
          </div>
          <div className="flex-1 border-t border-l border-[#646464] bg-white">
            <RouteTable />
          </div>
        </div>
      </div>
    </section>
  );
}

export default function App() {
  return (
    <div className="relative flex h-screen overflow-hidden bg-[#2f4262] font-['Noto_Sans','Noto_Sans_CJK_SC',sans-serif]">
      <ObjectSidebar />
      <main className="ml-[5px] flex min-w-0 flex-1 flex-col">
        <div className="mb-[5px] flex min-h-0 flex-1 flex-col bg-[#d6dbe9]">
          <div className="flex min-h-0 flex-1">
            <div className="w-[23px] shrink-0 pl-[3px]">
              <svg className="h-[9px] w-4" viewBox="0 0 16 9">
                <path d="M1 2l14 4M15 0L2 8M8 0v4l5 4" fill="none" stroke="#555" />
                <g fill="#b00020">
                  <circle cx="1.500" cy="2" r="1.700" /><circle cx="14" cy="1" r="1.700" /><circle cx="14" cy="6" r="1.700" />
                  <circle cx="3" cy="7.500" r="1.700" /><circle cx="8" cy="2" r="1.500" />
                </g>
              </svg>
            </div>
            <div className="min-h-0 min-w-0 flex-1">
              <NetworkMap />
            </div>
          </div>
          <div className="flex h-6 shrink-0 items-end pl-[3px] text-[13px] text-[#444]">
            <button className="h-[21px] bg-white px-[5px] pb-0.5">起始页</button>
            <button className="h-[22px] bg-[#ffeccb] px-[5px] pb-0.5 text-black">路网编辑器</button>
          </div>
        </div>
        <ListPanel />
      </main>
      <p className="pointer-events-none absolute right-3.5 bottom-[7px] font-['Liberation_Sans'] text-[17px] leading-6 text-[#707070]/75">
        CSDN @XueZheng@gdut
      </p>
    </div>
  );
}
